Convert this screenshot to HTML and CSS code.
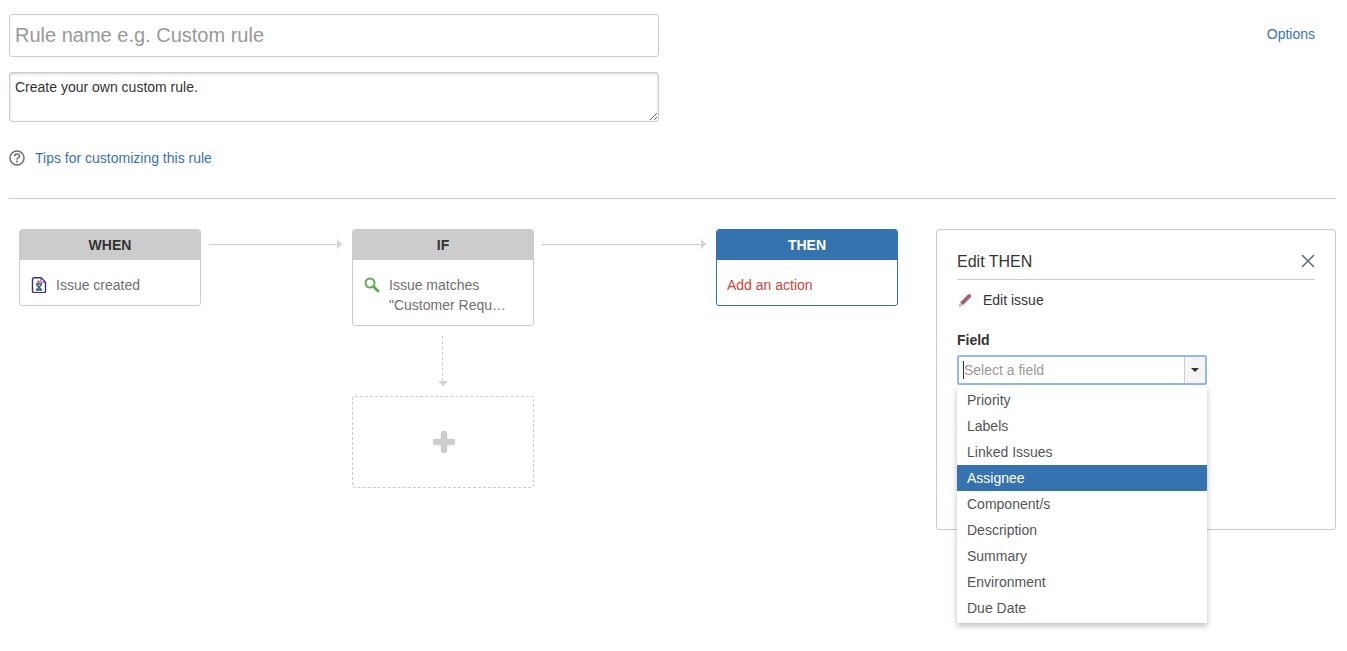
FILE: index.html
```html
<!DOCTYPE html>
<html lang="en">
<head>
<meta charset="utf-8">
<title>Custom rule</title>
<link rel="stylesheet" href="styles.css">
</head>
<body>
<div class="page">
  <header class="head">
    <div class="head-fields">
      <input class="name-input" type="text" placeholder="Rule name e.g. Custom rule">
      <textarea class="desc-input">Create your own custom rule.</textarea>
      <div class="tips">
        <svg class="tips-icon" width="16" height="16" viewBox="0 0 16 16" aria-hidden="true">
          <circle cx="8" cy="8" r="7" fill="none" stroke="#707070" stroke-width="1.500"/>
          <path d="M5.600 6.300c0-1.500 1.100-2.300 2.500-2.300s2.400.9 2.400 2.100c0 1.800-2.500 1.700-2.500 3.400" fill="none" stroke="#707070" stroke-width="1.600"/>
          <rect x="7.100" y="10.600" width="1.800" height="1.800" fill="#707070"/>
        </svg>
        <a class="link" href="#">Tips for customizing this rule</a>
      </div>
    </div>
    <a class="link options" href="#">Options</a>
  </header>
  <hr class="rule">
  <main class="flow">
    <div class="col">
      <section class="card">
        <h2 class="card-head">WHEN</h2>
        <div class="card-body">
          <svg class="card-icon" width="16" height="16" viewBox="0 0 16 16" aria-hidden="true">
            <path d="M1.500 2.500q0-1.800 1.800-1.800h6.700l4.500 4.500v8.800q0 1.800-1.800 1.800h-9.400q-1.800 0-1.800-1.800z" fill="#fff" stroke="#37307f" stroke-width="1.400"/>
            <path d="M9.800 1v4.300h4.400" fill="none" stroke="#7a5a9a" stroke-width="1"/>
            <path d="M5 7h6M5 13h6" stroke="#5a3a70" stroke-width="1.300"/>
            <path d="M5.500 7.500l5 5.500M10.500 7.500l-5 5.500" stroke="#2f6fb0" stroke-width="1.700"/>
            <circle cx="7.500" cy="4.800" r="1.300" fill="#c0463c"/>
          </svg>
          <span class="card-text">Issue created</span>
        </div>
      </section>
    </div>
    <div class="arrow arrow-short"></div>
    <div class="col">
      <section class="card">
        <h2 class="card-head">IF</h2>
        <div class="card-body">
          <svg class="card-icon" width="16" height="16" viewBox="0 0 16 16" aria-hidden="true">
            <circle cx="6" cy="6" r="4.500" fill="none" stroke="#62a85a" stroke-width="2"/>
            <path d="M9.500 9.500l4.500 4.500" stroke="#62a85a" stroke-width="2.800" stroke-linecap="round"/>
          </svg>
          <span class="card-text">Issue matches "Customer Requ…</span>
        </div>
      </section>
      <div class="arrow-down"></div>
      <div class="add-box">
        <svg width="24" height="24" viewBox="0 0 24 24" aria-hidden="true">
          <path d="M12 4v16M4 12h16" stroke="#cccccc" stroke-width="6.500" stroke-linecap="round"/>
        </svg>
      </div>
    </div>
    <div class="arrow arrow-long"></div>
    <div class="col">
      <section class="card card-active">
        <h2 class="card-head">THEN</h2>
        <div class="card-body">
          <a class="add-action" href="#">Add an action</a>
        </div>
      </section>
    </div>
    <aside class="panel">
      <div class="panel-head">
        <span class="panel-title">Edit THEN</span>
        <svg class="panel-close" width="14" height="14" viewBox="0 0 14 14" aria-hidden="true">
          <path d="M1 1l12 12M13 1L1 13" stroke="#5e6c7a" stroke-width="1.500"/>
        </svg>
      </div>
      <div class="panel-action">
        <svg width="16" height="16" viewBox="0 0 16 16" aria-hidden="true">
          <path d="M3 10.500l8-8q1-1 2.200-.2l.8.800q.8 1.200-.2 2.200l-8 8z" fill="#a5636f"/>
          <path d="M2.700 11l3 3-4 1z" fill="#c9b7b0"/>
        </svg>
        <span>Edit issue</span>
      </div>
      <label class="field-label">Field</label>
      <div class="select">
        <div class="select-input"><span class="caret-line"></span><span class="placeholder">Select a field</span></div>
        <div class="select-btn"><span class="tri"></span></div>
        <ul class="menu">
          <li>Priority</li>
          <li>Labels</li>
          <li>Linked Issues</li>
          <li class="menu-on">Assignee</li>
          <li>Component/s</li>
          <li>Description</li>
          <li>Summary</li>
          <li>Environment</li>
          <li>Due Date</li>
        </ul>
      </div>
    </aside>
  </main>
</div>
</body>
</html>
```
FILE: styles.css
```css
* { box-sizing: border-box; }
html, body { margin: 0; padding: 0; background: #fff; }
body {
  font-family: "Liberation Sans", Arial, sans-serif;
  font-size: 14px;
  line-height: 20px;
  color: #333;
  min-height: 651px;
}
.page { padding: 14px 11px 0 9px; width: 1347px; }
.head { display: flex; justify-content: space-between; align-items: flex-start; }
.head-fields { width: 650px; display: flex; flex-direction: column; }
.name-input {
  display: block; width: 650px; height: 43px;
  border: 1px solid #ccc; border-radius: 3px;
  padding: 0 5px;
  font: 20px "Liberation Sans", Arial, sans-serif;
  color: #333; outline: none;
}
.name-input::placeholder { color: #999; opacity: 1; }
.desc-input {
  display: block; width: 650px; height: 50px; margin-top: 15px;
  border: 1px solid #ccc; border-radius: 3px;
  box-shadow: inset 0 1px 3px rgba(0,0,0,.18);
  padding: 6px 5px;
  font: 14px/17px "Liberation Sans", Arial, sans-serif;
  color: #333; outline: none; resize: vertical;
}
.tips { display: flex; align-items: center; gap: 10px; margin-top: 26px; height: 20px; }
.tips-icon { flex: none; }
.link { color: #3b73af; text-decoration: none; }
.options { margin: 10px 21px 0 0; }
.rule { border: 0; border-top: 1px solid #ccc; margin: 30px 0 0; height: 0; }
.flow { display: flex; align-items: flex-start; padding: 30px 0 0 10px; }
.col { width: 182px; flex: none; display: flex; flex-direction: column; }
.card { border: 1px solid #ccc; border-radius: 3px; background: #fff; overflow: hidden; }
.card-head {
  margin: 0; height: 30px; background: #ccc;
  font-size: 14px; line-height: 30px; font-weight: bold;
  text-align: center; color: #333;
}
.card-body { display: flex; align-items: flex-start; gap: 9px; padding: 15px 10px 10px; color: #707070; }
.card-icon { flex: none; margin-top: 2px; margin-left: 1px; }
.card-text { flex: 1; }
.card-active { border-color: #3572b0; }
.card-active .card-head { background: #3572b0; color: #fff; }
.add-action { color: #d04437; text-decoration: none; }
.arrow { flex: none; position: relative; height: 1px; background: #ccc; margin-top: 15px; margin-left: 8px; margin-right: 10px; }
.arrow::after {
  content: ""; position: absolute; right: 0; top: -5px;
  border-left: 5px solid #d4d4d4; border-top: 5.500px solid transparent; border-bottom: 5.500px solid transparent;
}
.arrow-short { width: 133px; }
.arrow-long { width: 164px; }
.arrow-down {
  position: relative; width: 0; height: 50px; margin: 10px 0 10px 90px;
  border-left: 1px dashed #ccc;
}
.arrow-down::after {
  content: ""; position: absolute; left: -5.500px; bottom: 0;
  border-top: 5px solid #d4d4d4; border-left: 5px solid transparent; border-right: 5px solid transparent;
}
.add-box {
  height: 92px; border: 1px dashed #ccc; border-radius: 3px; padding-left: 2px;
  display: flex; align-items: center; justify-content: center;
}
.panel {
  flex: none; width: 400px; height: 301px; margin-left: 38px;
  border: 1px solid #ccc; border-radius: 3px;
  padding: 20px;
}
.panel-head {
  display: flex; justify-content: space-between; align-items: center;
  height: 30px; border-bottom: 1px solid #ccc; padding-top: 1px; padding-bottom: 7px;
}
.panel-close { margin-top: -2px; }
.panel-title { font-size: 16px; line-height: 22px; color: #333; }
.panel-action { display: flex; align-items: center; gap: 10px; height: 20px; margin-top: 10px; color: #333; }
.field-label { display: block; margin-top: 20px; font-weight: bold; line-height: 20px; color: #333; }
.select {
  position: relative; display: flex; width: 250px; height: 30px; margin-top: 5px;
  border: 2px solid #94b8f0; border-radius: 2px;
}
.select-input { flex: 1; display: flex; align-items: center; padding-left: 4px; }
.caret-line { width: 1px; height: 18px; background: #333; }
.placeholder { color: #999; }
.select-btn {
  width: 21px; flex: none; background: #f5f5f5; border-left: 1px solid #ccc;
  display: flex; align-items: center; justify-content: center;
}
.tri { border-top: 4px solid #333; border-left: 4px solid transparent; border-right: 4px solid transparent; }
.menu {
  position: absolute; left: -2px; top: 29px; width: 250px; margin: 0; padding: 1px 0 2px;
  list-style: none; background: #fff;
  box-shadow: 0 3px 6px rgba(0,0,0,.25);
  color: #555;
}
.menu li { height: 26px; line-height: 26px; padding-left: 10px; }
.menu .menu-on { background: #3572b0; color: #fff; }
```
